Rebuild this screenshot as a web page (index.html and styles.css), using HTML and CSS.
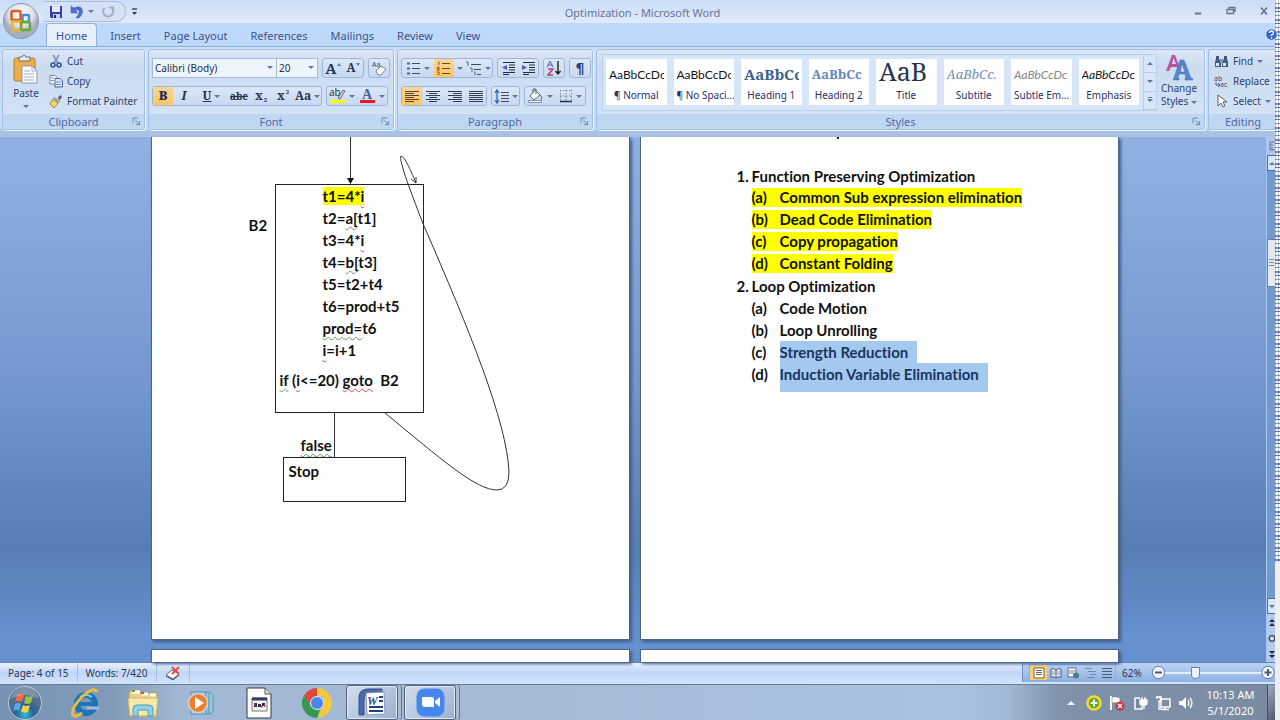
FILE: index.html
```html
<!DOCTYPE html>
<html lang="en">
<head>
<meta charset="utf-8">
<title>Optimization - Microsoft Word</title>
<link rel="stylesheet" href="styles.css">
</head>
<body>
<div class="app">
  <header class="titlebar">
    <div class="quick">
      <button aria-label="Save"><svg width="14" height="14" viewBox="0 0 14 14"><path d="M1 1h12v12H2l-1-1z" fill="#3b3fa0"/><path d="M3 1h8v6H3z" fill="#dfe9fa"/><path d="M4 9h7v4H4z" fill="#c5d0ec"/><path d="M5 10h2v3H5z" fill="#252a70"/></svg></button>
      <button aria-label="Undo"><svg width="14" height="14" viewBox="0 0 14 14"><path d="M1 1v7h7L5.500 5.500Q8 4 9 6t-3 7h3q5-5 3-9T4 3z" fill="#4a70d0" stroke="#3e5cb4" stroke-width=".5"/></svg></button>
      <span class="caret"></span>
      <button aria-label="Redo"><svg width="14" height="14" viewBox="0 0 14 14"><path d="M8 2.500h4v4M11.500 4a5 5 0 1 1-8-1" fill="none" stroke="#a3b1c6" stroke-width="2.200"/></svg></button>
    </div>
    <button class="customize" aria-label="Customize"><svg width="7" height="8" viewBox="0 0 7 8"><path d="M1 1h5" stroke="#34425c" stroke-width="1.400"/><path d="M1 4h5L3.500 7z" fill="#34425c"/></svg></button>
    <h1 class="caption">Optimization - Microsoft Word</h1>
    <div class="window-buttons">
      <button aria-label="Minimize"><svg width="10" height="10" viewBox="0 0 10 10"><path d="M2 7.500h6" stroke="#65758e" stroke-width="2"/></svg></button>
      <button aria-label="Restore"><svg width="10" height="10" viewBox="0 0 10 10"><path d="M3 3V1.500h6v4H7.500M1 3.500h6.500v4H1z" fill="none" stroke="#65758e" stroke-width="1.300"/></svg></button>
      <button aria-label="Close"><svg width="10" height="10" viewBox="0 0 10 10"><path d="M2 1.500l6 7M8 1.500l-6 7" stroke="#65758e" stroke-width="1.800"/></svg></button>
    </div>
  </header>
  <button class="orb" aria-label="Office Button"><svg width="38" height="38" viewBox="0 0 38 38"><defs><radialGradient id="og" cx=".5" cy=".3"><stop offset="0" stop-color="#fff"/><stop offset=".7" stop-color="#dde3ec"/><stop offset="1" stop-color="#a5afbd"/></radialGradient></defs><circle cx="19" cy="19" r="17.500" fill="url(#og)" stroke="#8795aa"/><g fill="none" stroke-width="2.500"><rect x="9.500" y="9" width="9" height="9" rx="1.500" stroke="#e05a20"/><rect x="10.500" y="19.500" width="9" height="8.500" rx="1.500" stroke="#edb329"/><rect x="20.500" y="13" width="6.500" height="7" rx="1" stroke="#4b8ed0"/><rect x="19" y="20" width="9" height="8" rx="1.500" stroke="#67a83c"/></g></svg></button>

  <nav class="tabs">
    <button class="tab tab-active">Home</button><button class="tab">Insert</button><button class="tab">Page Layout</button><button class="tab">References</button><button class="tab">Mailings</button><button class="tab">Review</button><button class="tab">View</button>
    <button class="help" aria-label="Help"><svg width="13" height="13" viewBox="0 0 13 13"><circle cx="6.500" cy="6.500" r="5.800" fill="#3266c8" stroke="#dce9fb"/><path d="M4.500 5Q4.500 3 6.500 3t2 2q0 1-2 2.200V8M6.500 9v1.500" stroke="#fff" stroke-width="1.400" fill="none"/></svg></button>
  </nav>

  <main class="ribbon">
    <section class="group clipboard">
      <div class="content clip-content">
        <button class="paste"><svg width="26" height="30" viewBox="0 0 26 30"><rect x="1" y="4" width="21" height="23" rx="2" fill="#edae49" stroke="#b37b2b"/><path d="M6 3h3q2-4 4 0h4v4H6z" fill="#e4e8ee" stroke="#69717e"/><path d="M9 12h10l5 5v12H9z" fill="#fff" stroke="#8b98b2"/><path d="M19 12v5h5M11 17h6M11 20h10M11 23h10M11 26h10" fill="none" stroke="#9badcf"/></svg><span>Paste</span><i class="caret"></i></button>
        <div class="clip-list">
          <button><svg width="14" height="14" viewBox="0 0 14 14"><path d="M4 1l5 8M10 1L5 9" stroke="#7e8fae" stroke-width="1.500"/><circle cx="4" cy="11" r="2" fill="none" stroke="#2f4d99" stroke-width="1.500"/><circle cx="10" cy="11" r="2" fill="none" stroke="#2f4d99" stroke-width="1.500"/></svg>Cut</button>
          <button><svg width="14" height="14" viewBox="0 0 14 14"><path d="M1 1.500h5l2 2V10H1z" fill="#fff" stroke="#7886a3"/><path d="M6 4.500h5l2.500 2.500v6H6z" fill="#dce8fc" stroke="#49629e"/><path d="M7 8h5M7 10.500h5M2 4h3M2 6.500h3" stroke="#728dc0"/></svg>Copy</button>
          <button><svg width="14" height="14" viewBox="0 0 14 14"><path d="M9 3l3-2 1 2-3 4z" fill="#655b82"/><path d="M6 3l5 5-2 1-5-5z" fill="#93a0b8"/><path d="M4 5l5 4-4 5-4-4z" fill="#f0d467" stroke="#a38228"/></svg>Format Painter</button>
        </div>
      </div>
      <h2>Clipboard<svg class="launch" width="8" height="8" viewBox="0 0 8 8"><use href="#launcher"/></svg></h2>
    </section>

    <section class="group font">
      <div class="content rows">
        <div class="row">
          <div class="combos"><label class="combo combo-font"><select aria-label="Font"><option>Calibri (Body)</option></select></label><label class="combo combo-size"><select aria-label="Font size"><option>20</option></select></label></div>
          <div class="set"><button class="serif big" aria-label="Grow font">A<i class="caret up"></i></button><button class="serif mid" aria-label="Shrink font">A<i class="caret"></i></button></div>
          <div class="set"><button class="w20" aria-label="Clear formatting"><svg width="17" height="17" viewBox="0 0 17 17"><text x="1" y="7" class="tiny">Aa</text><path d="M5 11l5-5 5 3-5 6H7z" fill="#fff" stroke="#7a8196"/></svg></button></div>
        </div>
        <div class="row">
          <div class="set"><button class="serif on w20"><b>B</b></button><button class="serif w22"><i>I</i></button><button class="serif w33"><u>U</u><i class="caret"></i></button><button class="serif abc w22"><s>abc</s></button><button class="serif w22">x<sub>2</sub></button><button class="serif w22">x<sup>2</sup></button><button class="serif w28">Aa<i class="caret"></i></button></div>
          <div class="set"><button class="w30" aria-label="Highlight"><svg width="17" height="17" viewBox="0 0 17 17"><text x="0" y="8" class="ab">ab</text><path d="M9 10l5-8 2 1-5 8z" fill="#d6ddea" stroke="#60687d"/><path d="M1 12h15v3H1z" fill="#ff0"/></svg><i class="caret"></i></button><button class="w30" aria-label="Font color"><svg width="17" height="17" viewBox="0 0 17 17"><text x="3" y="11" class="capital">A</text><path d="M1 12h15v3H1z" fill="#e41b23"/></svg><i class="caret"></i></button></div>
        </div>
      </div>
      <h2>Font<svg class="launch" width="8" height="8" viewBox="0 0 8 8"><use href="#launcher"/></svg></h2>
    </section>

    <section class="group paragraph">
      <div class="content rows">
        <div class="row">
          <div class="set"><button class="w32" aria-label="Bullets"><svg width="14" height="14"><path d="M5 2.500h8M5 7.500h8M5 12.500h8" stroke="#40495d"/><path d="M0 2.500h3M0 7.500h3M0 12.500h3" stroke="#4664b3" stroke-width="2"/></svg><i class="caret"></i></button><button class="on w20" aria-label="Numbering"><svg width="14" height="14"><path d="M5 2.500h8M5 7.500h8M5 12.500h8" stroke="#6d4b25"/><path d="M1 1h1v3M0 6h2v1.500H0V9h3M0 11h2v3H0" fill="none" stroke="#805a27"/></svg></button><button class="w10" aria-label="Numbering options"><i class="caret"></i></button><button class="w28" aria-label="Multilevel list"><svg width="16" height="15"><path d="M5 3.500h10M8 8.500h7M11 13.500h4" stroke="#40495d"/><path d="M0 1h2v4M4 7h2v4M8 11h1v3" fill="none" stroke="#5064a0"/></svg><i class="caret"></i></button></div>
          <div class="set"><button class="w20" aria-label="Decrease indent"><svg width="15" height="14"><path d="M2 1.500h12M8 4h6M8 6.500h6M8 9h6M2 11.500h12M2 13.500h6" stroke="#222b3f" stroke-width="1.200"/><path d="M6 4v5L1 6.500z" fill="#5d55aa"/></svg></button><button class="w20" aria-label="Increase indent"><svg width="15" height="14"><path d="M2 1.500h12M8 4h6M8 6.500h6M8 9h6M2 11.500h12M2 13.500h6" stroke="#222b3f" stroke-width="1.200"/><path d="M1 4v5l5-2.500z" fill="#5d55aa"/></svg></button></div>
          <div class="set"><button class="w20" aria-label="Sort"><svg width="16" height="16"><path d="M1 7l3-6 3 6M2 5h4" fill="none" stroke="#4368b5"/><path d="M2 9h5l-5 6h5" fill="none" stroke="#b44277" stroke-width="1.500"/><path d="M12 1v12M9.500 11l2.500 3 2.500-3" fill="none" stroke="#222" stroke-width="1.400"/></svg></button></div>
          <div class="set"><button class="w20 pilcrow" aria-label="Show marks">¶</button></div>
        </div>
        <div class="row">
          <div class="set"><button class="on w20" aria-label="Align left"><svg width="14" height="13"><path d="M0 1.500h14M0 3.500h9M0 5.500h14M0 7.500h9M0 9.500h14M0 11.500h9" stroke="#59452c"/></svg></button><button class="w22" aria-label="Center"><svg width="14" height="13"><path d="M0 1.500h14M3 3.500h8M0 5.500h14M3 7.500h8M0 9.500h14M3 11.500h8" stroke="#343d50"/></svg></button><button class="w22" aria-label="Align right"><svg width="14" height="13"><path d="M0 1.500h14M5 3.500h9M0 5.500h14M5 7.500h9M0 9.500h14M5 11.500h9" stroke="#343d50"/></svg></button><button class="w20" aria-label="Justify"><svg width="14" height="13"><path d="M0 1.500h14M0 3.500h14M0 5.500h14M0 7.500h14M0 9.500h14M0 11.500h14" stroke="#343d50"/></svg></button></div>
          <div class="set"><button class="w28" aria-label="Line spacing"><svg width="15" height="15"><path d="M7 3.500h8M7 6.500h8M7 9.500h8M7 12.500h8" stroke="#454c5e"/><path d="M3 1v13M1 4l2-3 2 3M1 11l2 3 2-3" fill="none" stroke="#3563bc" stroke-width="1.300"/></svg><i class="caret"></i></button></div>
          <div class="set"><button class="w30" aria-label="Shading"><svg width="17" height="16"><path d="M3 8l5-6 5 5-6 5z" fill="#fff" stroke="#596780"/><path d="M6 5V1h3v5M13 7q3 2 1 5" fill="none" stroke="#596780"/><path d="M1.500 12.500h13v2h-13z" fill="#fff" stroke="#8190a8"/></svg><i class="caret"></i></button><button class="w30" aria-label="Borders"><svg width="14" height="14"><path d="M1.500 1v12M12.500 1v12M7 1v12M1 1.500h12M1 7h12" stroke="#7886a0" stroke-dasharray="1.500 1.500"/><path d="M1 12.500h12" stroke="#232c3e" stroke-width="1.500"/></svg><i class="caret"></i></button></div>
        </div>
      </div>
      <h2>Paragraph<svg class="launch" width="8" height="8" viewBox="0 0 8 8"><use href="#launcher"/></svg></h2>
    </section>

    <section class="group styles">
      <div class="content style-content">
        <div class="gallery">
          <button class="style"><span class="sample">AaBbCcDc</span><span class="name">¶ Normal</span></button>
          <button class="style"><span class="sample">AaBbCcDc</span><span class="name">¶ No Spaci...</span></button>
          <button class="style"><span class="sample heading1">AaBbCc</span><span class="name">Heading 1</span></button>
          <button class="style"><span class="sample heading2">AaBbCc</span><span class="name">Heading 2</span></button>
          <button class="style"><span class="sample title">AaB</span><span class="name">Title</span></button>
          <button class="style"><span class="sample subtitle">AaBbCc.</span><span class="name">Subtitle</span></button>
          <button class="style"><span class="sample subtle">AaBbCcDc</span><span class="name">Subtle Em...</span></button>
          <button class="style"><span class="sample emphasis">AaBbCcDc</span><span class="name">Emphasis</span></button>
          <div class="gallery-scroll"><button aria-label="Previous row"><i class="caret up"></i></button><button aria-label="Next row"><i class="caret"></i></button><button aria-label="More styles"><i class="caret more"></i></button></div>
        </div>
        <button class="change"><svg width="28" height="28" viewBox="0 0 28 28"><path d="M1 17L7 1h3l6 16h-3l-1-4H6l-2 4zM7 10h4L8.500 4z" fill="#b755a5"/><path d="M8 26l1-2 6-18h4l7 18 2 1v1h-8v-2h1l-1-4h-6l-1 4h1v2zM15 18h5l-3-8z" fill="#5687cc" stroke="#426aa8" stroke-width=".5"/></svg><span>Change</span><span>Styles <i class="caret"></i></span></button>
      </div>
      <h2>Styles<svg class="launch" width="8" height="8" viewBox="0 0 8 8"><use href="#launcher"/></svg></h2>
    </section>

    <section class="group editing">
      <div class="content edit-list">
        <button><svg width="15" height="14"><path d="M2 2h3v3l2 3v5H1V8l1-3zM10 2h3v3l1 3v5H8V8l2-3z" fill="#405986"/><path d="M6 5h3v4H6z" fill="#8196bc"/><path d="M2 9h3v3H2zM9 9h3v3H9z" fill="#dce7fa"/></svg>Find <i class="caret"></i></button>
        <button><svg width="15" height="14"><text x="0" y="7" class="tiny">ab</text><text x="6" y="13" class="tiny">ac</text><path d="M2 8v3h3M4 9l2 2-2 2" fill="none" stroke="#3a5ea8"/></svg>Replace</button>
        <button><svg width="15" height="14"><path d="M4 1v11l3-3 2 4 2-1-2-4h4z" fill="#fff" stroke="#555f73"/></svg>Select <i class="caret"></i></button>
      </div>
      <h2>Editing</h2>
    </section>
  </main>

  <div class="workspace">
    <div class="pages">
      <article class="page">
        <svg class="edges" width="479" height="502" viewBox="0 0 479 502"><g fill="none" stroke="#333"><path d="M198.500 0v42M182.500 276v45"/><path d="M233 276C289 322 324 353 345 353Q357 353 357 335C355 285 317 192 272 89C261 61 246 22 249 19C253 20 258 32 264 46M259 42l5 4v-6"/></g><path d="M195 41h7l-3.500 6z" fill="#111"/></svg>
        <p class="block-label">B2</p>
        <div class="node block">
          <p><mark>t1=4*<span class="wavy red">i</span></mark></p>
          <p>t2=<span class="wavy green">a[</span>t1]</p>
          <p>t3=4*<span class="wavy red">i</span></p>
          <p>t4=<span class="wavy green">b[</span>t3]</p>
          <p>t5=t2+t4</p>
          <p>t6=prod+t5</p>
          <p><span class="wavy green">prod=</span>t6</p>
          <p><span class="wavy red">i</span>=i+1</p>
          <p class="condition"><span class="wavy green">if</span> (<span class="wavy red">i</span>&lt;=20) <span class="wavy red">goto</span>&nbsp; B2</p>
        </div>
        <p class="false-label"><span class="wavy green">false</span></p>
        <div class="node stop"><p>Stop</p></div>
      </article>
      <article class="page outline">
        <i class="descender"></i>
        <p class="topic"><span>1.</span>Function Preserving Optimization</p>
        <p class="item"><mark><span>(a)</span>Common Sub expression elimination</mark></p>
        <p class="item"><mark><span>(b)</span>Dead Code Elimination</mark></p>
        <p class="item"><mark><span>(c)</span>Copy propagation</mark></p>
        <p class="item"><mark><span>(d)</span>Constant Folding</mark></p>
        <p class="topic"><span>2.</span>Loop Optimization</p>
        <p class="item"><span>(a)</span>Code Motion</p>
        <p class="item"><span>(b)</span>Loop Unrolling</p>
        <p class="item"><span>(c)</span><em>Strength Reduction</em></p>
        <p class="item"><span>(d)</span><em class="last">Induction Variable Elimination</em></p>
      </article>
      <article class="page"></article>
      <article class="page"></article>
    </div>
    <div class="scrollbar">
      <button class="ruler" aria-label="View ruler"><svg width="9" height="13"><path d="M8 2H3v8h5M3 5h3M5 10V7" fill="none" stroke="#65779a"/></svg></button>
      <button class="arrow" aria-label="Scroll up"><i class="caret up"></i></button>
      <div class="track"><div class="thumb"></div></div>
      <button class="arrow" aria-label="Scroll down"><i class="caret"></i></button>
      <button class="browse" aria-label="Previous page"><svg width="9" height="9"><path d="M2 4l3-3 3 3zM2 8l3-3 3 3z" fill="#20283c"/></svg></button>
      <button class="browse" aria-label="Browse object"><svg width="9" height="9"><circle cx="5" cy="4.500" r="2.800" fill="#d7e1f3" stroke="#333b4d" stroke-width="1.300"/></svg></button>
      <button class="browse" aria-label="Next page"><svg width="9" height="9"><path d="M2 1l3 3 3-3zM2 5l3 3 3-3z" fill="#20283c"/></svg></button>
    </div>
  </div>

  <footer class="status">
    <span class="cell">Page: 4 of 15</span><span class="cell">Words: 7/420</span>
    <span class="cell proof"><svg width="16" height="14"><path d="M1 9l6-5 7 4-6 5z" fill="#fff" stroke="#53607b"/><path d="M1 10l7 4 6-5" fill="none" stroke="#424f6c"/><path d="M7 1l7 7M14 1L7 8" stroke="#e44f48" stroke-width="2"/></svg></span>
    <div class="view-tools">
      <div class="views">
        <button class="on" aria-label="Print layout"><svg width="12" height="12"><path d="M1 1h10v10H1z" fill="#fff" stroke="#6f6047"/><path d="M3 3.500h6M3 5.500h6M3 7.500h6" stroke="#77664b"/></svg></button>
        <button aria-label="Full screen reading"><svg width="12" height="12"><path d="M1 2q3-1 5 1 2-2 5-1v8q-3-1-5 1-2-2-5-1zM6 3v8" fill="#f3f7ff" stroke="#4b5a78"/><path d="M2 5h3M2 7h3M7 5h3M7 7h3" stroke="#7e8aa3"/></svg></button>
        <button aria-label="Web layout"><svg width="12" height="12"><path d="M1 1h8v9H1z" fill="#fff" stroke="#5c6b86"/><path d="M2 4h6M2 6h5" stroke="#687fa8"/><circle cx="9" cy="8.500" r="3" fill="#477e8c"/></svg></button>
        <button aria-label="Outline"><svg width="12" height="12"><path d="M1 1.500h7M4 4.500h8M6 7.500h6M3 10.500h8" stroke="#7587a5"/></svg></button>
        <button aria-label="Draft"><svg width="12" height="12"><path d="M1 1.500h10M1 4.500h10M1 7.500h10M1 10.500h10" stroke="#4b5871"/></svg></button>
      </div>
      <span class="percent">62%</span>
      <button aria-label="Zoom out"><svg width="15" height="15"><circle cx="7.500" cy="7.500" r="6.200" fill="#edf3fb" stroke="#677a9c"/><path d="M4 7.500h7" stroke="#4c5e7b" stroke-width="2"/></svg></button>
      <input class="zoom" type="range" aria-label="Zoom" min="0" max="100" value="29">
      <button aria-label="Zoom in"><svg width="14" height="15"><circle cx="7" cy="7.500" r="6.200" fill="#edf3fb" stroke="#677a9c"/><path d="M3.500 7.500h7M7 4v7" stroke="#4c5e7b" stroke-width="2"/></svg></button>
    </div>
  </footer>

  <div class="taskbar">
    <button class="launcher" aria-label="Start"><svg width="36" height="36" viewBox="0 0 36 36"><defs><radialGradient id="st" cy=".85"><stop offset="0" stop-color="#35bce2"/><stop offset=".55" stop-color="#24638d"/><stop offset="1" stop-color="#536f8d"/></radialGradient></defs><circle cx="18" cy="18" r="16.500" fill="url(#st)" stroke="#b7cbd9"/><path d="M10 10q4-2 7 0l-2 7q-3-2-7 0z" fill="#ef6944"/><path d="M19 11q4 2 7-1l-2 8q-4 2-7 0z" fill="#97c54a"/><path d="M8 19q4-2 6 0l-2 7q-3-2-6 0z" fill="#58a7ed"/><path d="M16 20q4 2 7 0l-2 7q-4 2-7-1z" fill="#f7cf45"/><path d="M4 14q3-11 14-12t14 12q-14-8-28 0" fill="#fff" opacity=".25"/></svg></button>
    <button class="launcher" aria-label="Internet Explorer"><svg width="32" height="32" viewBox="0 0 32 32"><circle cx="17" cy="17" r="9" fill="none" stroke="#1c74b9" stroke-width="6"/><path d="M11 17h18" stroke="#1c74b9" stroke-width="4"/><path d="M18 21h12" stroke="#a8bcd8" stroke-width="3"/><path d="M11 10q6-4 12 0" fill="none" stroke="#78ceed" stroke-width="2"/><path d="M28 5Q25-1 14 9 1 22 4 28q2 3 9-2" fill="none" stroke="#e9bd3e" stroke-width="3"/></svg></button>
    <button class="launcher" aria-label="File Explorer"><svg width="32" height="32" viewBox="0 0 32 32"><path d="M2 6l2-3h7l2 3h17v23H2z" fill="#ead28b" stroke="#b99c59"/><path d="M5 5h8M15 7h6M23 8h6" stroke="#fff" stroke-width="3"/><path d="M5 4h3" stroke="#56a04f" stroke-width="2"/><path d="M14 6h3" stroke="#e0493e" stroke-width="2"/><path d="M1 11h30l-2 18H3z" fill="#f7e9a7" stroke="#cdb873"/><path d="M6 29v-7q0-4 4-4h12q4 0 4 4v7h-5v-6H11v6z" fill="#91d2ea" stroke="#4b9cbd"/></svg></button>
    <button class="launcher" aria-label="Media Player"><svg width="30" height="30" viewBox="0 0 30 30"><path d="M5 4h19l3 3v17l-3 2H5z" fill="#9ac9e5" stroke="#5694be"/><path d="M20 4v22M23 5v21" stroke="#4c8cb7"/><circle cx="12" cy="15" r="9.500" fill="#ed802c" stroke="#d4d5cf" stroke-width="1.500"/><path d="M9 9l9 6-9 6z" fill="#fff"/></svg></button>
    <button class="launcher" aria-label="Program file"><svg width="26" height="32" viewBox="0 0 26 32"><path d="M1 1h18l6 6v24H1z" fill="#fff" stroke="#353a40"/><path d="M19 1v6h6" fill="#ddd" stroke="#555"/><path d="M6 11h15v13H6z" fill="#f4f4f4" stroke="#777"/><path d="M6 12h15" stroke="#333c64" stroke-width="3"/><path d="M8 16h3v4H8zM12 17h3v3h-3zM16 16h3v3h-3z" fill="#2c2951"/><path d="M8 17h1v2M15 19h1v2M18 18h1v2" stroke="#c74c53"/></svg></button>
    <button class="launcher" aria-label="Chrome"><svg width="32" height="32" viewBox="0 0 32 32"><path d="M3 8.500A15 15 0 0 1 16 1v8a7 7 0 0 0-6 10z" fill="#dc493b"/><path d="M16 1a15 15 0 0 1 0 30l6-12V9h-6z" fill="#f6c839"/><path d="M3 8.500A15 15 0 0 0 16 31l3-8-9-4z" fill="#349854"/><circle cx="16" cy="16" r="6.500" fill="#4e85e7" stroke="#e9edf2"/></svg></button>
    <button class="task" aria-label="Word"><svg width="30" height="30" viewBox="0 0 30 30"><path d="M2 27V9q0-7 8-8h15v4H12q-5 1-5 7v15z" fill="#496aaa" stroke="#345389"/><path d="M9 5l18-1 1 22-18 1z" fill="#fff" stroke="#8398bd"/><text x="10" y="17" class="word-w">W</text><path d="M22 9h4M22 13h4M12 19h14M12 23h14" stroke="#254275" stroke-width="2"/></svg></button>
    <button class="task" aria-label="Zoom meeting"><svg width="29" height="29" viewBox="0 0 29 29"><rect x=".5" y=".5" width="28" height="28" rx="8" fill="#4587ed"/><path d="M6 10q0-1 1-1h9q2 0 2 2v8H9q-3 0-3-3zM19 13l5-4v10l-5-4z" fill="#fff"/></svg></button>
    <div class="tray">
      <button aria-label="Hidden icons"><i class="caret up white"></i></button>
      <button aria-label="Updates"><svg width="16" height="16"><circle cx="8" cy="8" r="6.500" fill="#65a629" stroke="#f2db37" stroke-width="2.500"/><path d="M4.500 8h7M8 4.500v7" stroke="#fff" stroke-width="2"/></svg></button>
      <button aria-label="Action Center"><svg width="16" height="16"><path d="M2 1v14" stroke="#fff" stroke-width="2"/><path d="M3 2q4-1 8 1v6Q7 7 3 8z" fill="#fff" stroke="#59677a" stroke-width=".5"/><circle cx="11" cy="11" r="4.500" fill="#cb3340"/><path d="M9 9l4 4M13 9l-4 4" stroke="#fff" stroke-width="1.400"/></svg></button>
      <button aria-label="Power"><svg width="16" height="16"><path d="M8 3H3v11h7v-3" fill="none" stroke="#fff" stroke-width="1.500"/><path d="M4 5h3v8H4z" fill="#75869b"/><path d="M8 5h7v4l-3 2-4-2zM10 5V2M13 5V2M12 10v4" fill="#fff" stroke="#fff" stroke-width="1.300"/></svg></button>
      <button aria-label="Network"><svg width="16" height="16"><path d="M6 4h9v8H6zM10 12v2M7 14.500h7" fill="none" stroke="#fff" stroke-width="1.500"/><path d="M1 2h5v4H4v8h3M2 1v3M5 1v3" fill="none" stroke="#fff" stroke-width="1.300"/></svg></button>
      <button aria-label="Volume"><svg width="16" height="16"><path d="M1 6h3l4-4v12l-4-4H1z" fill="#fff"/><path d="M10 5q2 3 0 6M12 3q4 5 0 10" fill="none" stroke="#fff" stroke-width="1.300"/></svg></button>
    </div>
    <div class="clock"><time>10:13 AM</time><time>5/1/2020</time></div>
    <button class="show-desktop" aria-label="Show desktop"></button>
  </div>
</div>
<div class="edge-noise"></div>
<svg class="defs" width="0" height="0"><defs><g id="launcher"><path d="M1 6V1h5M4 7.500h3.500V4M3.500 3.500L7 7" fill="none" stroke="#7388ad"/></g></defs></svg>
</body>
</html>
```
FILE: styles.css
```css
* { box-sizing: border-box; }
body { margin: 0; height: 100vh; display: flex; overflow: hidden; font: 11px/14px "Noto Sans", "Open Sans", sans-serif; color: #2c3f70; background: #a8c1e5; }
button { font: inherit; color: inherit; background: none; border: 0; padding: 0; margin: 0; display: flex; align-items: center; justify-content: center; }
p, h1, h2 { margin: 0; font-weight: inherit; font-size: inherit; }
svg { flex: none; display: block; }
.defs { position: absolute; }
.app { flex: 1; min-width: 0; display: flex; flex-direction: column; position: relative; }
.edge-noise { width: 5px; background: linear-gradient(transparent 78%, #eee 78%), repeating-linear-gradient(90deg, rgba(35,70,150,.3) 0 1px, transparent 1px 3px), repeating-linear-gradient(#fff 0 3px, #7ba688 3px 4px, #fff 4px 7px, #9a75bd 7px 9px, #e8fff7 9px 11px, #697596 11px 12px); }
.caret { display: inline-block; border: 3px solid transparent; border-top-color: #61759c; border-bottom: 0; vertical-align: middle; }
.caret.up { border-bottom: 3px solid #61759c; border-top: 0; }
.caret.white { border-bottom: 4px solid #f0f4fa; border-left-width: 4px; border-right-width: 4px; }

.titlebar { height: 23px; display: flex; align-items: center; background: linear-gradient(#cbdcf6, #e0ebfc); padding-left: 43px; color: #657494; }
.quick { display: flex; align-items: center; gap: 7px; height: 21px; width: 83px; padding-left: 6px; border: 1px solid #a8bddd; border-left: 0; border-radius: 0 10px 10px 0; background: #d5e2f5; }
.quick .caret { margin-left: -3px; }
.customize { margin-left: 5px; }
.caption { flex: 1; text-align: center; padding-right: 46px; padding-top: 2px; }
.window-buttons { display: flex; gap: 23px; width: 82px; padding-bottom: 2px; }
.orb { position: absolute; left: 2px; top: 2px; z-index: 2; }
.tabs { height: 24px; display: flex; gap: 3px; background: #bfd9fd; padding-left: 46px; border-bottom: 1px solid #8daed9; }
.tab { padding: 3px 10px 0; align-items: center; color: #3c5488; }
.tab-active { background: #e8f0fb; border: 1px solid #91b2dc; border-bottom: 0; border-radius: 4px 4px 0 0; padding: 2px 9px 0; }
.help { margin-left: auto; margin-right: -3px; }

.ribbon { height: 90px; flex: none; display: flex; gap: 3px; padding: 2px 0 7px 2px; background: linear-gradient(#cddff4, #c4dafa 90%, #a8c1e5 94%); overflow: hidden; }
.group { display: flex; flex-direction: column; border: 1px solid #a4bfe3; border-radius: 3px; background: linear-gradient(#dce7f5, #cbdcf1 20%, #d5e4f6); box-shadow: 1px 1px 0 #edf5ff; }
.group h2 { position: relative; height: 15px; line-height: 15px; text-align: center; color: #5069a1; background: #c0d7f3; }
.launch { position: absolute; right: 4px; top: 3px; }
.content { flex: 1; min-height: 0; font-size: 10px; }
.clipboard { width: 143px; }
.font { width: 246px; }
.paragraph { width: 196px; }
.styles { flex: 1; min-width: 0; }
.editing { width: 69px; border-right: 0; margin-right: -2px; }
.clip-content { display: flex; }
.paste { width: 46px; flex-direction: column; justify-content: flex-start; padding-top: 4px; gap: 2px; }
.paste .caret { margin-top: 3px; }
.clip-list, .edit-list { display: flex; flex-direction: column; gap: 6px; padding-top: 4px; }
.clip-list button, .edit-list button { justify-content: flex-start; gap: 4px; white-space: nowrap; }
.edit-list { padding-left: 5px; }
.rows { display: flex; flex-direction: column; gap: 8px; padding: 8px 3px 0; }
.row { display: flex; gap: 4px; height: 20px; }
.set { display: flex; border: 1px solid #9db6da; border-radius: 3px; background: linear-gradient(#dce8f7, #c7d9f0); }
.set button { min-width: 10px; gap: 3px; }
.set .on { background: linear-gradient(#f9d69b, #ffc45f); }
.set .w10 { width: 11px; } .set .w20 { width: 20px; } .set .w22 { width: 22px; } .set .w28 { width: 27px; } .set .w30 { width: 30px; } .set .w32 { width: 32px; } .set .w33 { width: 33px; }
.serif { font: bold 12px/16px "Liberation Serif", serif; color: #27314c; }
.serif sup, .serif sub { font-size: 6px; line-height: 6px; }
.set .serif sup { align-self: flex-start; margin-left: -2px; margin-top: 2px; }
.set .serif sub { align-self: flex-end; margin-left: -2px; margin-bottom: 2px; }
.set .big { font-size: 15px; width: 20px; gap: 0; }
.set .mid { font-size: 12px; width: 20px; gap: 0; }
.big .caret, .mid .caret { align-self: flex-start; margin-top: 4px; border-left-width: 2px; border-right-width: 2px; }
.set .serif { font-family: "Noto Serif", "Liberation Serif", serif; }
.set .abc { font-size: 10px; }
.combos { display: flex; width: 167px; }
.combo { position: relative; background: #eef4fc; border: 1px solid #a5bbdc; }
.combo-font { flex: 1; }
.combo-size { width: 41px; border-left: 0; }
.combo select { appearance: none; width: 100%; height: 18px; padding: 0 2px; border: 0; background: none; font: inherit; color: #25304c; }
.combo::after { content: ""; position: absolute; right: 3px; top: 7px; border: 3px solid transparent; border-top-color: #61759c; border-bottom: 0; }
.tiny { font: 7px "Open Sans", sans-serif; fill: #303c57; }
.ab { font: 10px "Open Sans", sans-serif; fill: #202b47; }
.capital { font: bold 14px "Liberation Serif", serif; fill: #4b5f98; }
.word-w { font: italic bold 12px "Liberation Serif", serif; fill: #254a90; }
.set .pilcrow { font: bold 14px "DejaVu Sans", sans-serif; }
.style-content { display: flex; padding: 4px 3px 3px 5px; }
.gallery { display: flex; flex: 1; min-width: 0; border: 1px solid #bbd1ed; background: #d6e5f8; }
.style { flex: 1; min-width: 0; height: 46px; margin: 4px 4px 0 3px; padding: 2px 3px 3px; display: flex; flex-direction: column; justify-content: flex-end; align-items: stretch; background: #fff; overflow: hidden; }
.sample { font: 12px/27px Lato, sans-serif; color: #151515; height: 27px; overflow: hidden; white-space: nowrap; text-align: left; }
.name { text-align: center; white-space: nowrap; color: #28306b; }
.heading1 { font: bold 15px/27px "Noto Serif", "DejaVu Serif", serif; color: #3b608d; }
.heading2 { font: bold 13px/27px "Noto Serif", "DejaVu Serif", serif; color: #6289b9; }
.title { font: 25px/20px "Noto Serif", "DejaVu Serif", serif; color: #26344b; }
.subtitle { font: italic 13px/27px "Noto Serif", "DejaVu Serif", serif; color: #7190b8; }
.subtle { font-style: italic; color: #858585; }
.emphasis { font-style: italic; }
.gallery-scroll { width: 13px; display: flex; flex-direction: column; border-left: 1px solid #b9cce5; }
.gallery-scroll button { flex: 1; border-bottom: 1px solid #b8cce7; }
.caret.more { box-shadow: 0 -3px 0 -1px #61759c; }
.change { width: 44px; flex-direction: column; justify-content: flex-start; }
.change span { line-height: 13px; }

.workspace { flex: 1; min-height: 0; display: flex; background: linear-gradient(#8fb1e2, #7599cf 45%, #567eb3 78%, #6690cf 95%); }
.pages { flex: 1; display: grid; grid-template-columns: 479px 479px; justify-content: center; grid-template-rows: 1fr 13px; gap: 9px 10px; font: bold 15px/22px Lato, sans-serif; font-variant-ligatures: none; color: #111; padding-left: 3px; }
.page { position: relative; overflow: hidden; background: #fff; border: 1px solid #50627d; border-top: 0; box-shadow: 2px 2px 3px #405f8d; }
.page:nth-child(n+3) { border-top: 1px solid #50627d; border-bottom: 0; }
.edges { position: absolute; left: 0; top: 0; z-index: 1; }
.node, .block-label, .false-label { position: absolute; }
.node { border: 1px solid #222; }
.block { left: 123px; top: 47px; width: 149px; height: 229px; padding: 0 0 0 47px; white-space: nowrap; }
.block-label { left: 97px; top: 77px; }
.block .condition { margin: 8px 0 0 -43px; }
.false-label { left: 149px; top: 297px; }
.stop { left: 131px; top: 320px; width: 123px; height: 45px; padding: 2px 5px; }
mark { background: #ff0; color: inherit; }
.wavy { text-decoration: underline wavy 1px; text-underline-offset: 2px; text-decoration-skip-ink: none; }
.red { text-decoration-color: #c34d62; } .green { text-decoration-color: #5d9d60; }
.outline { padding: 28px 0 0 96px; }
.descender { position: absolute; left: 196px; top: 0; width: 2px; height: 2px; background: #222; }
.topic, .item { display: flex; }
.topic span { width: 15px; }
.item { padding-left: 15px; }
.item span { display: inline-block; width: 28px; flex: none; }
.item mark { line-height: 19px; margin: 1px 0 2px; }
.item em { font-style: normal; background: #a5c8ef; color: #173660; padding-right: 9px; }
.item .last { padding-bottom: 7px; }
.scrollbar { width: 9px; display: flex; flex-direction: column; background: #a9c5ed; border-left: 1px solid #a9c8f2; overflow: hidden; }
.ruler { height: 18px; background: #aec6ed; }
.arrow { height: 16px; flex: none; border: 1px solid #4e6e9e; border-right: 0; background: #d9e6f7; }
.track { flex: 1; background: #7398ce; padding-top: 68px; }
.thumb { height: 48px; border: 1px solid #657e9d; border-right: 0; background: repeating-linear-gradient(#7689a3 0 1px, #e3e9ef 1px 3px) center / 5px 8px no-repeat #e3e9ef; }
.browse { height: 16px; flex: none; background: #b2cbed; }

.status { height: 22px; flex: none; display: flex; align-items: stretch; background: linear-gradient(#eaf2fd, #c0d6f7 45%, #d2e3fb); border-top: 1px solid #6685af; line-height: 18px; color: #2b3550; font-size: 10px; padding-bottom: 2px; }
.cell { padding: 0 8px; border-right: 1px solid #a9bfdf; display: flex; align-items: center; }
.view-tools { margin-left: auto; display: flex; align-items: center; background: linear-gradient(#bcd4f6, #8eb0e2); border-left: 1px solid #7392bd; padding-left: 6px; width: 253px; }
.views { display: flex; border: 1px solid #8daedb; height: 17px; margin-right: 6px; }
.views button { width: 17px; }
.views .on { background: #ffce77; }
.percent { width: 29px; }
.zoom { appearance: none; flex: 1; min-width: 0; height: 14px; margin: 0 -1px; background: linear-gradient(#e4effc, #e4effc) center / 100% 2px no-repeat; }
.zoom::-webkit-slider-thumb { appearance: none; width: 9px; height: 12px; background: #edf3fb; border: 1px solid #6e7f9c; border-radius: 1px 1px 5px 5px; }
.taskbar { height: 36px; flex: none; display: flex; align-items: center; background: linear-gradient(90deg, #7892b3, #829bb9 9%, #a2b7d3 14%, #a9c0df 75%, #a2b9d7 79%, #7f92aa 83%, #7a8ba1); border-top: 1px solid #697d98; padding-left: 7px; overflow: hidden; }
.launcher { width: 58px; }
.launcher:first-child { width: 36px; margin-right: 13px; }
.task { width: 52px; height: 35px; border: 1px solid #52637c; border-radius: 3px; background: linear-gradient(135deg, #d2deed, #9bb1ce); box-shadow: inset 0 0 0 1px #e2eaf5, 3px 0 0 #a9bad1, 4px 0 0 #64768f; margin-right: 6px; }
.tray { margin-left: auto; display: flex; gap: 7px; }
.tray button:first-child { margin-right: 4px; }
.clock { width: 73px; text-align: center; color: #fff; display: flex; flex-direction: column; line-height: 16px; font-size: 11px; }
.show-desktop { width: 8px; height: 35px; border-left: 1px solid #3f4d60; background: linear-gradient(135deg, #9dacbc, #4d5c70); }
```
